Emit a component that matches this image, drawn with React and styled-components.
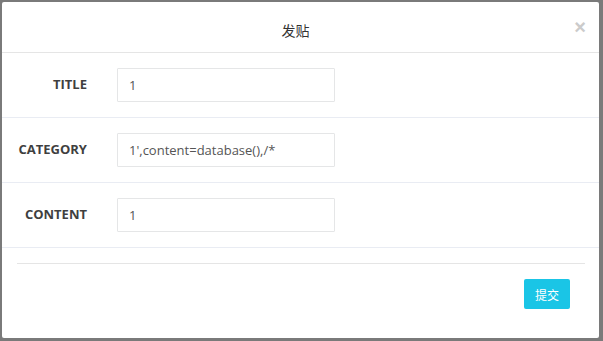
import React from "react";
import styled, { createGlobalStyle } from "styled-components";

const Global = createGlobalStyle`
  html, body { margin: 0; padding: 0; }
  body {
    background: #7a7a7a;
    font-family: "Open Sans", "Noto Sans CJK SC", sans-serif;
    width: 603px;
    height: 341px;
    overflow: hidden;
  }
`;

const Backdrop = styled.div`
  padding: 2px 4px 3px 2px;
  height: 341px;
  box-sizing: border-box;
`;

const Modal = styled.div`
  background: #fff;
  border-radius: 2px;
  height: 336px;
  display: flex;
  flex-direction: column;
`;

const Header = styled.div`
  position: relative;
  height: 50px;
  border-bottom: 1px solid #e5e5e5;
  display: flex;
  align-items: center;
  justify-content: center;
  padding-right: 10px;
`;

const Title = styled.h4`
  margin: 0;
  font-family: "Open Sans", "Noto Sans CJK SC", sans-serif;
  font-size: 14px;
  font-weight: 400;
  color: #333;
  padding-top: 6px;
`;

const Close = styled.button`
  position: absolute;
  right: 13px;
  top: 15px;
  border: 0;
  background: none;
  padding: 0;
  font-family: "Liberation Sans", sans-serif;
  font-size: 20px;
  font-weight: 700;
  line-height: 20px;
  color: #cbcbcb;
`;

const Row = styled.div`
  height: 64px;
  border-bottom: 1px solid #e9ecf3;
  display: flex;
  align-items: center;
`;

const Label = styled.label`
  width: 85px;
  text-align: right;
  font-family: "Open Sans", sans-serif;
  font-size: 13px;
  font-weight: 700;
  color: #3f3f3f;
  margin-right: 30px;
  padding-bottom: 3px;
`;

const Input = styled.div`
  width: 218px;
  height: 34px;
  box-sizing: border-box;
  border: 1px solid #e5e6e7;
  border-radius: 1px;
  padding: 0 12px 0 11px;
  display: flex;
  align-items: center;
  font-family: "Open Sans", sans-serif;
  font-size: 13px;
  color: #555555;
`;

const Footer = styled.div`
  padding: 15px 14px 0 15px;
`;

const Rule = styled.div`
  border-top: 1px solid #e5e5e5;
`;

const Actions = styled.div`
  display: flex;
  justify-content: flex-end;
  padding: 15px 15px 0 0;
`;

const Button = styled.button`
  width: 46px;
  height: 30px;
  border: 0;
  border-radius: 2px;
  background: #1ac5e6;
  color: #fff;
  font-family: "Noto Sans CJK SC", sans-serif;
  font-size: 12px;
  padding: 0;
`;

const fields = [
  { label: "TITLE", value: "1" },
  { label: "CATEGORY", value: "1',content=database(),/*" },
  { label: "CONTENT", value: "1" },
];

export default function App() {
  return (
    <>
      <Global />
      <Backdrop>
        <Modal>
          <Header>
            <Title>发贴</Title>
            <Close>×</Close>
          </Header>
          {fields.map((f) => (
            <Row key={f.label}>
              <Label>{f.label}</Label>
              <Input>{f.value}</Input>
            </Row>
          ))}
          <Footer>
            <Rule />
            <Actions>
              <Button>提交</Button>
            </Actions>
          </Footer>
        </Modal>
      </Backdrop>
    </>
  );
}
